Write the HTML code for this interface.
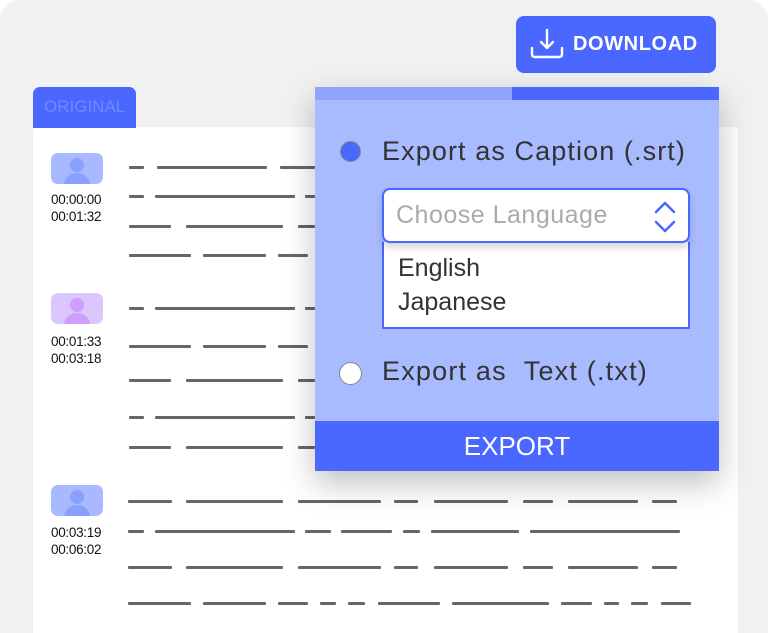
<!DOCTYPE html>
<html><head><meta charset="utf-8"><style>
*{margin:0;padding:0;box-sizing:border-box}
body{width:768px;height:633px;overflow:hidden;background:#fff;font-family:"Liberation Sans",sans-serif;position:relative}
.a{position:absolute}
.d{position:absolute;height:3px;background:#666;border-radius:1px}
.ts{position:absolute;left:51px;font-size:13.5px;color:#111;line-height:17px;letter-spacing:-0.3px}
.av{position:absolute;left:51px;width:52px;height:31px;border-radius:7px;overflow:hidden}
</style></head><body>
<div class="a" style="left:0;top:0;width:768px;height:633px;background:#f1f1f1;border-radius:20px 20px 0 0"></div>
<div class="a" style="left:33px;top:127px;width:705px;height:506px;background:#fff;border-radius:4px 4px 0 0"></div>
<div class="a" style="left:33px;top:87px;width:103px;height:41px;background:#4a67ff;border-radius:7px 7px 0 0;color:#7189ff;font-size:17px;padding:10px 0 0 11px">ORIGINAL</div>

<div class="av" style="top:153px;background:#a8b9ff"><div class="a" style="left:19px;top:5px;width:14px;height:14px;border-radius:50%;background:#8aa0ff"></div><div class="a" style="left:13px;top:20px;width:26px;height:24px;border-radius:50%;background:#8aa0ff"></div></div>
<div class="ts" style="top:191px">00:00:00<br>00:01:32</div>
<div class="av" style="top:293px;background:#dcc6ff"><div class="a" style="left:19px;top:5px;width:14px;height:14px;border-radius:50%;background:#cf9eff"></div><div class="a" style="left:13px;top:20px;width:26px;height:24px;border-radius:50%;background:#cf9eff"></div></div>
<div class="ts" style="top:333px">00:01:33<br>00:03:18</div>
<div class="av" style="top:485px;background:#a8b9ff"><div class="a" style="left:19px;top:5px;width:14px;height:14px;border-radius:50%;background:#8aa0ff"></div><div class="a" style="left:13px;top:20px;width:26px;height:24px;border-radius:50%;background:#8aa0ff"></div></div>
<div class="ts" style="top:524px">00:03:19<br>00:06:02</div>

<div class="d" style="top:166px;left:129px;width:15px"></div><div class="d" style="top:166px;left:157px;width:110px"></div><div class="d" style="top:166px;left:280px;width:35px"></div>
<div class="d" style="top:195px;left:129px;width:15px"></div><div class="d" style="top:195px;left:155px;width:140px"></div><div class="d" style="top:195px;left:305px;width:10px"></div>
<div class="d" style="top:225px;left:129px;width:42px"></div><div class="d" style="top:225px;left:186px;width:97px"></div><div class="d" style="top:225px;left:298px;width:17px"></div>
<div class="d" style="top:254px;left:129px;width:62px"></div><div class="d" style="top:254px;left:203px;width:63px"></div><div class="d" style="top:254px;left:278px;width:30px"></div>
<div class="d" style="top:307px;left:129px;width:15px"></div><div class="d" style="top:307px;left:155px;width:140px"></div><div class="d" style="top:307px;left:305px;width:10px"></div>
<div class="d" style="top:345px;left:129px;width:62px"></div><div class="d" style="top:345px;left:203px;width:63px"></div><div class="d" style="top:345px;left:278px;width:30px"></div>
<div class="d" style="top:379px;left:129px;width:42px"></div><div class="d" style="top:379px;left:186px;width:97px"></div><div class="d" style="top:379px;left:298px;width:17px"></div>
<div class="d" style="top:416px;left:129px;width:15px"></div><div class="d" style="top:416px;left:155px;width:140px"></div><div class="d" style="top:416px;left:305px;width:10px"></div>
<div class="d" style="top:446px;left:129px;width:42px"></div><div class="d" style="top:446px;left:186px;width:97px"></div><div class="d" style="top:446px;left:298px;width:17px"></div>
<div class="d" style="top:500px;left:128px;width:44px"></div><div class="d" style="top:500px;left:186px;width:97px"></div><div class="d" style="top:500px;left:298px;width:83px"></div><div class="d" style="top:500px;left:394px;width:24px"></div><div class="d" style="top:500px;left:434px;width:74px"></div><div class="d" style="top:500px;left:523px;width:30px"></div><div class="d" style="top:500px;left:568px;width:70px"></div><div class="d" style="top:500px;left:652px;width:25px"></div>
<div class="d" style="top:530px;left:128px;width:16px"></div><div class="d" style="top:530px;left:155px;width:140px"></div><div class="d" style="top:530px;left:305px;width:26px"></div><div class="d" style="top:530px;left:341px;width:51px"></div><div class="d" style="top:530px;left:403px;width:17px"></div><div class="d" style="top:530px;left:431px;width:88px"></div><div class="d" style="top:530px;left:530px;width:150px"></div>
<div class="d" style="top:566px;left:128px;width:44px"></div><div class="d" style="top:566px;left:186px;width:97px"></div><div class="d" style="top:566px;left:298px;width:83px"></div><div class="d" style="top:566px;left:394px;width:24px"></div><div class="d" style="top:566px;left:434px;width:74px"></div><div class="d" style="top:566px;left:523px;width:30px"></div><div class="d" style="top:566px;left:568px;width:70px"></div><div class="d" style="top:566px;left:652px;width:25px"></div>
<div class="d" style="top:602px;left:128px;width:63px"></div><div class="d" style="top:602px;left:203px;width:63px"></div><div class="d" style="top:602px;left:278px;width:30px"></div><div class="d" style="top:602px;left:320px;width:16px"></div><div class="d" style="top:602px;left:348px;width:17px"></div><div class="d" style="top:602px;left:378px;width:62px"></div><div class="d" style="top:602px;left:452px;width:97px"></div><div class="d" style="top:602px;left:561px;width:31px"></div><div class="d" style="top:602px;left:604px;width:15px"></div><div class="d" style="top:602px;left:631px;width:17px"></div><div class="d" style="top:602px;left:661px;width:30px"></div>

<div class="a" style="left:516px;top:16px;width:200px;height:57px;background:#4a67ff;border-radius:8px"></div>
<svg class="a" style="left:527px;top:26px" width="40" height="36" viewBox="0 0 40 36"><path d="M20 4v18M14 16l6 6 6-6M5 22v6q0 3 3 3h24q3 0 3-3v-6" fill="none" stroke="#fff" stroke-width="2.4" stroke-linecap="round" stroke-linejoin="round"/></svg>
<div class="a" style="left:573px;top:33px;color:#fff;font-weight:bold;font-size:20px;letter-spacing:0.6px">DOWNLOAD</div>

<div class="a" style="left:315px;top:87px;width:404px;height:384px;background:#a8bbff;box-shadow:0 12px 30px rgba(0,0,0,0.25)"></div>
<div class="a" style="left:315px;top:87px;width:197px;height:13px;background:#8fa3ff"></div>
<div class="a" style="left:512px;top:87px;width:207px;height:13px;background:#4a67ff"></div>
<div class="a" style="left:340px;top:141px;width:21px;height:21px;border-radius:50%;background:#4a67ff;border:1.5px solid #888"></div>
<div class="a" style="left:382px;top:136px;font-size:27px;color:#333;letter-spacing:1.1px">Export as Caption (.srt)</div>
<div class="a" style="left:382px;top:242px;width:308px;height:87px;background:#fff;border:2px solid #4a67ff;border-top:none"></div>
<div class="a" style="left:398px;top:251px;font-size:25px;color:#333;line-height:34px">English<br>Japanese</div>
<div class="a" style="left:382px;top:188px;width:308px;height:55px;background:#fff;border:2px solid #4a67ff;border-radius:8px;box-shadow:0 5px 8px rgba(0,0,0,0.15)"></div>
<div class="a" style="left:396px;top:201px;font-size:25px;color:#aaa;letter-spacing:0.5px">Choose Language</div>
<svg class="a" style="left:652px;top:198px" width="26" height="38" viewBox="0 0 26 38"><path d="M4 14l9-9 9 9M4 24l9 9 9-9" fill="none" stroke="#4a67ff" stroke-width="2.5" stroke-linecap="round" stroke-linejoin="round"/></svg>
<div class="a" style="left:339px;top:362px;width:23px;height:23px;border-radius:50%;background:#fff;border:1.5px solid #888"></div>
<div class="a" style="left:382px;top:356px;font-size:27px;color:#333;letter-spacing:1.2px">Export as&nbsp; Text (.txt)</div>
<div class="a" style="left:315px;top:421px;width:404px;height:50px;background:#4a67ff;color:#fff;font-size:26px;text-align:center;line-height:50px">EXPORT</div>
</body></html>
